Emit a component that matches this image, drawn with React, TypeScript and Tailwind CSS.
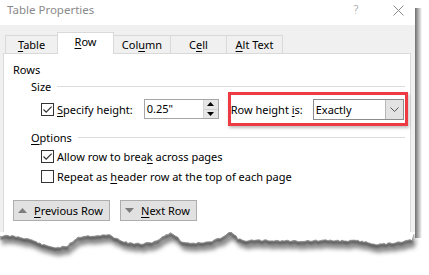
import React from "react";

const keyPts: [number, number][] = [
  [0, 4], [12, 4], [22, 5.5], [32, 8], [43, 13], [55, 15.5], [66, 15], [72, 10], [77, 5.5], [85, 4], [100, 3.5], [110, 3],
  [115, 6], [121, 8.5], [128, 11], [140, 12], [150, 11], [160, 7], [167, 2], [172, 1], [177, 5], [182, 10], [190, 11],
  [200, 11], [210, 10], [218, 7], [225, 3], [230, 0], [234, 2], [238, 7], [243, 8.5], [270, 8.5], [300, 9], [330, 8.5],
  [360, 9], [370, 11], [380, 12.5], [395, 10.5], [405, 9], [412, 8], [415, 0],
];

function edgePoints(): [number, number][] {
  const pts: [number, number][] = [];
  let seed = 11;
  const rnd = () => {
    seed = (seed * 9301 + 49297) % 233280;
    return seed / 233280;
  };
  for (let x = 0; x <= 415; x += 2) {
    let i = 0;
    while (i < keyPts.length - 2 && keyPts[i + 1][0] < x) i++;
    const [x0, y0] = keyPts[i];
    const [x1, y1] = keyPts[i + 1];
    const t = x1 === x0 ? 0 : Math.min(1, Math.max(0, (x - x0) / (x1 - x0)));
    let y = y0 + (y1 - y0) * t;
    y += (rnd() - 0.5) * 1.8;
    pts.push([x, y]);
  }
  return pts;
}

function TornEdge() {
  const pts = edgePoints();
  const line = pts.map(([x, y]) => `${x},${y.toFixed(2)}`).join(" ");
  const shadowOuter =
    pts.map(([x, y]) => `${x + 2},${(y + 0.5).toFixed(2)}`).join(" ") +
    " " +
    pts
      .slice()
      .reverse()
      .map(([x, y]) => `${x + 2},${(y + 8).toFixed(2)}`)
      .join(" ");
  const shadowInner =
    pts.map(([x, y]) => `${x},${(y + 0.3).toFixed(2)}`).join(" ") +
    " " +
    pts
      .slice()
      .reverse()
      .map(([x, y]) => `${x},${(y + 3).toFixed(2)}`)
      .join(" ");
  const paper = `0,0 ${line} 415,0`;
  return (
    <svg width="429" height="43" viewBox="0 0 429 43" className="block">
      <defs>
        <filter id="tornBlur" x="-5%" y="-50%" width="110%" height="200%">
          <feGaussianBlur stdDeviation="2.2" />
        </filter>
        <filter id="tornBlur2" x="-5%" y="-50%" width="110%" height="200%">
          <feGaussianBlur stdDeviation="0.8" />
        </filter>
        <linearGradient id="sideShadow" x1="0" x2="1" y1="0" y2="0">
          <stop offset="0" stopColor="#6e6e6e" />
          <stop offset="1" stopColor="#ffffff" />
        </linearGradient>
      </defs>
      <rect x="415" y="0" width="7" height="6" fill="url(#sideShadow)" />
      <polygon points={shadowOuter} fill="#8a8a8a" filter="url(#tornBlur)" />
      <polygon points={shadowInner} fill="#505050" filter="url(#tornBlur2)" />
      <polygon points={paper} fill="#ffffff" />
      <polyline points={line} fill="none" stroke="#6a6a6a" strokeWidth="0.6" />
    </svg>
  );
}

function U({ children }: { children: React.ReactNode }) {
  return <span className="underline underline-offset-[2px] decoration-[1px]">{children}</span>;
}

function Check({ checked }: { checked: boolean }) {
  return (
    <span className="w-[13px] h-[13px] border border-[#333333] bg-white flex items-center justify-center shrink-0">
      {checked && (
        <svg width="11" height="11" viewBox="0 0 11 11">
          <path d="M1.5 5.5 L4.2 8.2 L9.6 2.6" fill="none" stroke="#333333" strokeWidth="1.2" />
        </svg>
      )}
    </span>
  );
}

function Tab({ label, selected, w }: { label: React.ReactNode; selected?: boolean; w: string }) {
  if (selected) {
    return (
      <div
        className={`${w} h-[22px] -mb-px -ml-px relative z-10 bg-white border-x border-t border-[#d9d9d9] flex items-start justify-center pt-[1px]`}
      >
        {label}
      </div>
    );
  }
  return (
    <div
      className={`${w} h-[18px] -ml-px bg-[#f0f0f0] border-x border-t border-[#d9d9d9] flex items-start justify-center pt-[1px] first:ml-0`}
    >
      {label}
    </div>
  );
}

export default function App() {
  return (
    <div className="w-[429px] h-[275px] bg-white overflow-hidden text-[11px] text-black font-['Noto_Sans',sans-serif] leading-[15px]">
      <div className="flex h-[232px]">
        <div className="w-[415px] flex flex-col">
          {/* title bar */}
          <div className="h-[25px] bg-white flex items-start pt-[2px] pl-[7px] pr-[10px]">
            <span className="text-[#8a8a8a] text-[11.5px] leading-[16px]">Table Properties</span>
            <span className="ml-auto mr-[34px] text-[#8a8a8a] text-[12px] leading-[16px] font-['DejaVu_Sans',sans-serif] font-light">?</span>
            <svg width="11" height="11" viewBox="0 0 11 11" className="mt-[3px] mr-[1px]">
              <path d="M0.5 0.5 L10.5 10.5 M10.5 0.5 L0.5 10.5" stroke="#8a8a8a" strokeWidth="1" />
            </svg>
          </div>
          {/* body */}
          <div className="flex-1 bg-[#f0f0f0] pl-[3px] pr-[4px] flex flex-col">
            <div className="h-[28px] flex items-end pl-[2px]">
              <Tab w="w-[53px]" label={<span><U>T</U>able</span>} />
              <Tab w="w-[57px]" selected label={<span><U>R</U>ow</span>} />
              <Tab w="w-[58px]" label={<span>Col<U>u</U>mn</span>} />
              <Tab w="w-[57px]" label={<span>C<U>e</U>ll</span>} />
              <Tab w="w-[57px]" label={<span><U>A</U>lt Text</span>} />
            </div>
            <div className="flex-1 bg-white border-x border-t border-[#d9d9d9] flex flex-col">
              <div className="mt-[8px] h-[16px] leading-[16px] pl-[9px]">Rows</div>
              <div className="h-[16px] flex items-center pl-[27px] pr-[5px]">
                <span>Size</span>
                <span className="flex-1 h-px bg-[#dcdcdc] ml-[6px]" />
              </div>
              <div className="mt-[4px] h-[22px] flex items-center pl-[37px]">
                <Check checked />
                <span className="ml-[3px]">
                  <U>S</U>pecify height:
                </span>
                <div className="ml-[11px] w-[75px] h-[20px] border border-[#a6a6a6] bg-white flex">
                  <span className="flex-1 pl-[2px] leading-[18px]">0.25"</span>
                  <div className="w-[15px] flex flex-col border-l border-[#d4d4d4]">
                    <div className="flex-1 bg-[#e6e6e6] flex items-center justify-center border-b border-[#cfcfcf]">
                      <svg width="7" height="4" viewBox="0 0 7 4">
                        <path d="M0 4 L3.5 0 L7 4 Z" fill="#000" />
                      </svg>
                    </div>
                    <div className="flex-1 bg-[#e6e6e6] flex items-center justify-center">
                      <svg width="7" height="4" viewBox="0 0 7 4">
                        <path d="M0 0 L3.5 4 L7 0 Z" fill="#000" />
                      </svg>
                    </div>
                  </div>
                </div>
                <div className="ml-[9px] w-[180px] h-[34px] shrink-0 border-[3px] border-[#ee3a43] shadow-[1px_2px_3px_rgba(0,0,0,0.25)] flex items-center pr-[1px]">
                  <span className="whitespace-nowrap">
                    Row height <U>i</U>s:
                  </span>
                  <div className="ml-auto w-[91px] h-[21px] border border-[#8c8c8c] bg-white flex">
                    <span className="flex-1 pl-[2px] leading-[19px]">Exactly</span>
                    <div className="w-[18px] bg-[#e3e3e3] border-l border-[#b8b8b8] flex items-center justify-center">
                      <svg width="9" height="5" viewBox="0 0 9 5">
                        <path d="M0.5 0.5 L4.5 4.5 L8.5 0.5" fill="none" stroke="#555" strokeWidth="1" />
                      </svg>
                    </div>
                  </div>
                </div>
              </div>
              <div className="mt-[9px] h-[16px] flex items-center pl-[27px] pr-[5px]">
                <span>
                  <U>O</U>ptions
                </span>
                <span className="flex-1 h-px bg-[#dcdcdc] ml-[6px]" />
              </div>
              <div className="mt-[1px] h-[20px] flex items-center pl-[37px]">
                <Check checked />
                <span className="ml-[3px]">
                  Allow row to brea<U>k</U> across pages
                </span>
              </div>
              <div className="h-[20px] flex items-center pl-[37px]">
                <Check checked={false} />
                <span className="ml-[3px]">
                  Repeat as <U>h</U>eader row at the top of each page
                </span>
              </div>
              <div className="mt-[14px] flex pl-[9px] gap-[10px]">
                <div className="w-[97px] h-[21px] bg-[#e1e1e1] border border-[#adadad] flex items-center pl-[4px]">
                  <svg width="9" height="5" viewBox="0 0 9 5">
                    <path d="M0 5 L4.5 0 L9 5 Z" fill="#7d7d7d" />
                  </svg>
                  <span className="ml-[7px]">
                    <U>P</U>revious Row
                  </span>
                </div>
                <div className="w-[77px] h-[21px] bg-[#e1e1e1] border border-[#adadad] flex items-center pl-[4px]">
                  <svg width="9" height="5" viewBox="0 0 9 5">
                    <path d="M0 0 L4.5 5 L9 0 Z" fill="#7d7d7d" />
                  </svg>
                  <span className="ml-[7px]">
                    <U>N</U>ext Row
                  </span>
                </div>
              </div>
            </div>
          </div>
        </div>
        <div className="w-[7px] mt-[8px] bg-gradient-to-r from-[#6e6e6e] to-white" />
      </div>
      <TornEdge />
    </div>
  );
}
